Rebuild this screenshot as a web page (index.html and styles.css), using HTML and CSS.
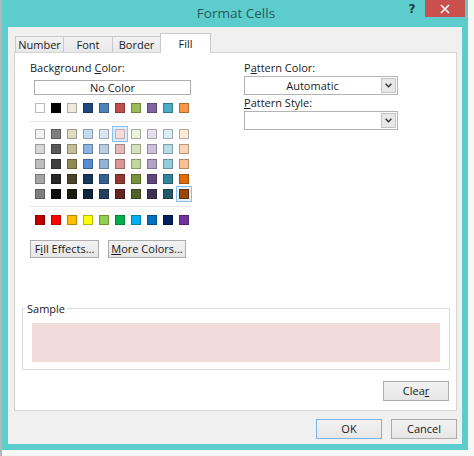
FILE: index.html
```html
<!DOCTYPE html>
<html>
<head>
<meta charset="utf-8">
<link rel="stylesheet" href="styles.css">
</head>
<body>
<div class="window">
  <div class="titlebar">
    <div class="tb-side"></div>
    <div class="title">Format Cells</div>
    <div class="tb-side tb-controls">
      <span class="help">?</span>
      <span class="close"><svg width="10" height="10" viewBox="0 0 10 10"><path d="M1 1 L9 9 M9 1 L1 9" stroke="#fff" stroke-width="1.6" fill="none"/></svg></span>
    </div>
  </div>
  <div class="client">
    <div class="tabs">
      <div class="tab t-number">Number</div>
      <div class="tab t-font">Font</div>
      <div class="tab t-border">Border</div>
      <div class="tab t-fill active">Fill</div>
    </div>
    <div class="panel">
      <div class="cols">
        <div class="col-left">
          <div class="label">Background <u>C</u>olor:</div>
          <div class="btn nocolor">No Color</div>
          <div class="swatches first-row">
            <span class="sw" style="background:#FFFFFF"></span>
            <span class="sw" style="background:#000000"></span>
            <span class="sw" style="background:#EEECE1"></span>
            <span class="sw" style="background:#1F497D"></span>
            <span class="sw" style="background:#4F81BD"></span>
            <span class="sw" style="background:#C0504D"></span>
            <span class="sw" style="background:#9BBB59"></span>
            <span class="sw" style="background:#8064A2"></span>
            <span class="sw" style="background:#4BACC6"></span>
            <span class="sw" style="background:#F79646"></span>
          </div>
          <div class="sep"></div>
          <div class="swatches theme">
            <span class="sw" style="background:#F2F2F2"></span>
            <span class="sw" style="background:#7F7F7F"></span>
            <span class="sw" style="background:#DDD9C3"></span>
            <span class="sw" style="background:#C6D9F0"></span>
            <span class="sw" style="background:#DBE5F1"></span>
            <span class="sw selected" style="background:#F2DCDB"></span>
            <span class="sw" style="background:#EBF1DD"></span>
            <span class="sw" style="background:#E5E0EC"></span>
            <span class="sw" style="background:#DBEEF3"></span>
            <span class="sw" style="background:#FDEADA"></span>

            <span class="sw" style="background:#D8D8D8"></span>
            <span class="sw" style="background:#595959"></span>
            <span class="sw" style="background:#C4BD97"></span>
            <span class="sw" style="background:#8DB3E2"></span>
            <span class="sw" style="background:#B8CCE4"></span>
            <span class="sw" style="background:#E5B9B7"></span>
            <span class="sw" style="background:#D7E3BC"></span>
            <span class="sw" style="background:#CCC1D9"></span>
            <span class="sw" style="background:#B7DDE8"></span>
            <span class="sw" style="background:#FBD5B5"></span>

            <span class="sw" style="background:#BFBFBF"></span>
            <span class="sw" style="background:#3F3F3F"></span>
            <span class="sw" style="background:#938953"></span>
            <span class="sw" style="background:#548DD4"></span>
            <span class="sw" style="background:#95B3D7"></span>
            <span class="sw" style="background:#D99694"></span>
            <span class="sw" style="background:#C3D69B"></span>
            <span class="sw" style="background:#B2A2C7"></span>
            <span class="sw" style="background:#92CDDC"></span>
            <span class="sw" style="background:#FAC08F"></span>

            <span class="sw" style="background:#A5A5A5"></span>
            <span class="sw" style="background:#262626"></span>
            <span class="sw" style="background:#494429"></span>
            <span class="sw" style="background:#17365D"></span>
            <span class="sw" style="background:#366092"></span>
            <span class="sw" style="background:#953734"></span>
            <span class="sw" style="background:#76923C"></span>
            <span class="sw" style="background:#5F497A"></span>
            <span class="sw" style="background:#31859B"></span>
            <span class="sw" style="background:#E36C09"></span>

            <span class="sw" style="background:#7F7F7F"></span>
            <span class="sw" style="background:#0C0C0C"></span>
            <span class="sw" style="background:#1D1B10"></span>
            <span class="sw" style="background:#0F243E"></span>
            <span class="sw" style="background:#244061"></span>
            <span class="sw" style="background:#632423"></span>
            <span class="sw" style="background:#4F6128"></span>
            <span class="sw" style="background:#3F3151"></span>
            <span class="sw" style="background:#205867"></span>
            <span class="sw hover" style="background:#974806"></span>
          </div>
          <div class="sep sep2"></div>
          <div class="swatches standard">
            <span class="sw" style="background:#C00000"></span>
            <span class="sw" style="background:#FF0000"></span>
            <span class="sw" style="background:#FFC000"></span>
            <span class="sw" style="background:#FFFF00"></span>
            <span class="sw" style="background:#92D050"></span>
            <span class="sw" style="background:#00B050"></span>
            <span class="sw" style="background:#00B0F0"></span>
            <span class="sw" style="background:#0070C0"></span>
            <span class="sw" style="background:#002060"></span>
            <span class="sw" style="background:#7030A0"></span>
          </div>
          <div class="btn-row">
            <div class="btn fx">F<u>i</u>ll Effects...</div>
            <div class="btn more"><u>M</u>ore Colors...</div>
          </div>
        </div>
        <div class="col-right">
          <div class="label">P<u>a</u>ttern Color:</div>
          <div class="combo">
            <div class="combo-text">Automatic</div>
            <div class="combo-arrow"><svg width="7" height="5" viewBox="0 0 7 5"><path d="M0.6 0.8 L3.5 3.8 L6.4 0.8" stroke="#333" stroke-width="1.4" fill="none"/></svg></div>
          </div>
          <div class="label"><u>P</u>attern Style:</div>
          <div class="combo">
            <div class="combo-text"></div>
            <div class="combo-arrow"><svg width="7" height="5" viewBox="0 0 7 5"><path d="M0.6 0.8 L3.5 3.8 L6.4 0.8" stroke="#333" stroke-width="1.4" fill="none"/></svg></div>
          </div>
        </div>
      </div>
      <fieldset class="sample">
        <legend>Sample</legend>
        <div class="sample-fill"></div>
      </fieldset>
      <div class="clear-row">
        <div class="btn clear">Clea<u>r</u></div>
      </div>
    </div>
    <div class="footer">
      <div class="btn ok">OK</div>
      <div class="btn cancel">Cancel</div>
    </div>
  </div>
</div>
</body>
</html>
```
FILE: styles.css
```css
html, body {
  margin: 0;
  padding: 0;
}
body {
  width: 474px;
  height: 456px;
  overflow: hidden;
  background: linear-gradient(to right, #aeb8b8 0, #aeb8b8 2px, #f6f7f7 2px);
  font-family: "Open Sans", "Noto Sans", sans-serif;
  font-size: 11px;
  color: #1a1a1a;
}
u { text-decoration: underline; text-underline-offset: 1px; }

.window {
  margin-left: 2px;
  width: 466px;
  height: 450px;
  background: #5ccccc;
  display: flex;
  flex-direction: column;
}

.titlebar {
  height: 27px;
  display: grid;
  grid-template-columns: 1fr auto 1fr;
  align-items: start;
}
.title {
  font-size: 13.5px;
  line-height: 27px;
  color: #2a5a5c;
  padding-left: 2px;
}
.tb-controls {
  display: flex;
  justify-content: flex-end;
  align-items: flex-start;
  padding-right: 3px;
}
.help {
  width: 26px;
  height: 17px;
  line-height: 18px;
  text-align: center;
  font-weight: bold;
  font-size: 12px;
  color: #1d3d40;
  font-family: "DejaVu Sans", sans-serif;
}
.close {
  width: 40px;
  height: 17px;
  background: #c9504c;
  display: flex;
  align-items: center;
  justify-content: center;
}
.close svg { display: block; }

.client {
  margin: 0 6px;
  height: 417px;
  background: #f0f0f0;
  padding: 6px 5px 0 6px;
  box-sizing: border-box;
}

.tabs {
  display: flex;
  align-items: flex-end;
  height: 19px;
  margin-left: 1px;
  position: relative;
  z-index: 1;
}
.tab {
  box-sizing: border-box;
  height: 16px;
  border: 1px solid #c9c9c9;
  border-bottom: none;
  background: linear-gradient(#f3f3f3, #e8e8e8);
  text-align: center;
  line-height: 15px;
  margin-left: -1px;
}
.t-number { width: 49px; margin-left: 0; }
.t-font { width: 50px; }
.t-border { width: 49px; }
.t-fill { width: 51px; }
.tab.active {
  height: 20px;
  background: #fff;
  margin-bottom: -1px;
  line-height: 19px;
}

.panel {
  background: #fff;
  border: 1px solid #d4d4d4;
  height: 359px;
  box-sizing: border-box;
  padding: 7px 0 0 15px;
}

.cols {
  display: grid;
  grid-template-columns: 161px 154px;
  column-gap: 53px;
  align-items: start;
}

.label {
  line-height: 15px;
  height: 15px;
  white-space: nowrap;
}

.btn {
  box-sizing: border-box;
  border: 1px solid #acacac;
  background: linear-gradient(#f2f2f2, #e6e6e6);
  text-align: center;
  white-space: nowrap;
}

.nocolor {
  margin: 5px 0 0 4px;
  width: 157px;
  height: 15px;
  line-height: 13px;
  background: #fff;
  border-color: #adadad;
}

.swatches {
  display: grid;
  grid-template-columns: repeat(10, 10px);
  grid-auto-rows: 10px;
  column-gap: 6px;
  row-gap: 5px;
  padding-left: 5px;
}
.first-row { margin-top: 8px; }
.theme { margin-top: 7px; }
.standard { margin-top: 8px; }

.sw {
  display: block;
  width: 10px;
  height: 10px;
  box-shadow: inset 0 0 0 1px rgba(0, 0, 0, 0.28);
}
.sw.selected {
  box-shadow: inset 0 0 0 1px rgba(0, 0, 0, 0.2), 0 0 0 2px #dcecf9, 0 0 0 3px #8cc0e8;
}
.sw.hover {
  box-shadow: inset 0 0 0 1px rgba(0, 0, 0, 0.3), 0 0 0 2px #e3f0fa, 0 0 0 3px #8cc0e8;
}

.sep {
  height: 1px;
  background: #e6e6e6;
  margin-top: 8px;
  width: 162px;
}
.sep2 { margin-top: 7px; }

.btn-row {
  display: flex;
  gap: 9px;
  margin-top: 15px;
}
.btn-row .btn {
  height: 18px;
  line-height: 16px;
}
.fx { width: 69px; }
.more { width: 78px; }

.col-right .combo {
  margin-top: 1px;
}
.combo {
  box-sizing: border-box;
  height: 19px;
  width: 154px;
  border: 1px solid #b4b4b4;
  background: #fff;
  display: flex;
}
.combo-text {
  flex: 1;
  text-align: center;
  line-height: 17px;
}
.combo-arrow {
  width: 15px;
  margin: 1px;
  box-sizing: border-box;
  border: 1px solid #c4c4c4;
  display: flex;
  align-items: center;
  justify-content: center;
  background: #e8e8e8;
}
.combo-arrow svg { display: block; }

.sample {
  margin: 43px 6px 0 -8px;
  padding: 0 9px 7px 9px;
  border: 1px solid #dcdcdc;
  min-width: 0;
}
.sample legend {
  padding: 0 2px;
  margin-left: -7px;
  line-height: 15px;
}
.sample-fill {
  height: 39px;
  margin-top: 7px;
  background: #f2dcdb;
}

.clear-row {
  display: flex;
  justify-content: flex-end;
  margin-top: 11px;
  padding-right: 7px;
}
.clear {
  width: 66px;
  height: 20px;
  line-height: 18px;
}

.footer {
  display: flex;
  justify-content: flex-end;
  gap: 9px;
  margin-top: 8px;
}
.footer .btn {
  width: 66px;
  height: 20px;
  line-height: 18px;
}
.ok {
  border-color: #7eb4ea;
}
```
